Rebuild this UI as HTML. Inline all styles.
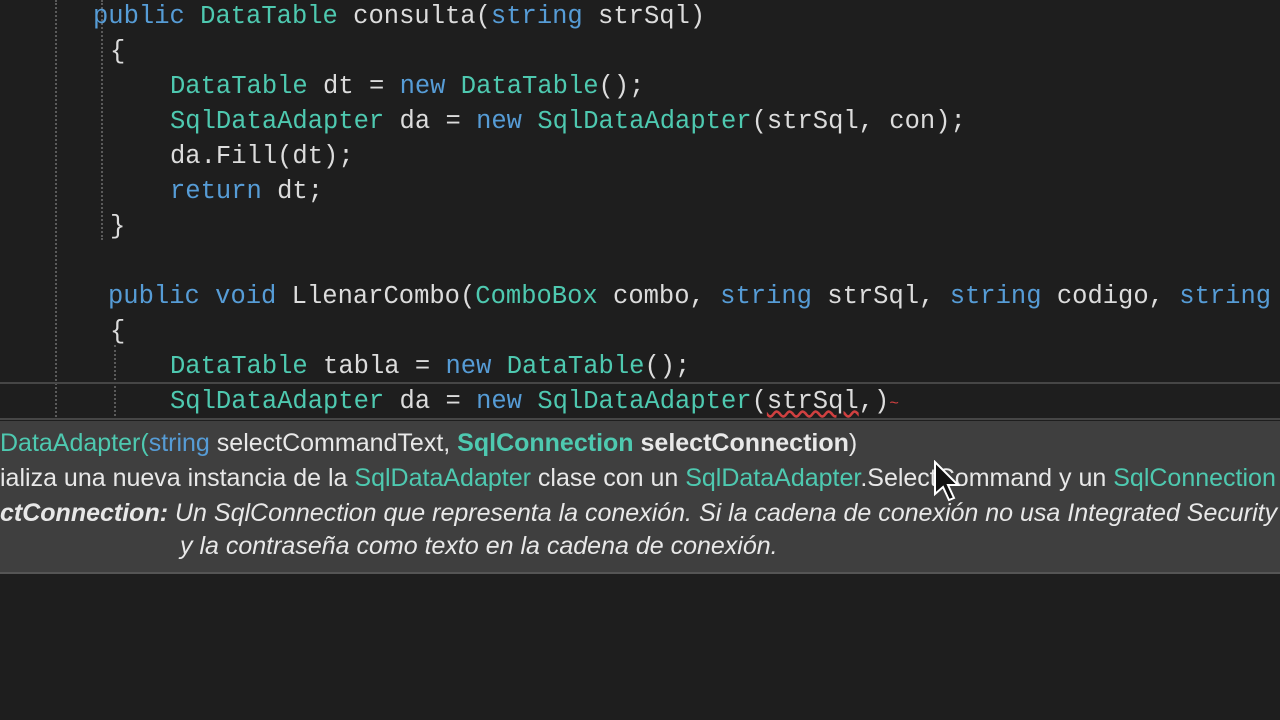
<!DOCTYPE html>
<html><head><meta charset="utf-8"><style>
body{margin:0;width:1280px;height:720px;background:#1e1e1e;overflow:hidden;position:relative}
.l{position:absolute;left:0;font-family:"Liberation Mono",monospace;font-size:25.5px;color:#dcdcdc;white-space:pre;line-height:35px;height:35px}
.k{color:#569cd6}.t{color:#4ec9b0}
.g{position:absolute;width:0;border-left:2px dotted #5a5a5a}
.tt{position:absolute;left:0;top:421px;width:1280px;height:151px;background:#3f3f3f;border-bottom:2px solid #555}
.s{position:absolute;left:0;font-family:"Liberation Sans",sans-serif;font-size:25px;color:#e8e8e8;white-space:pre;line-height:34px}
</style></head><body>
<div class="g" style="left:55px;top:0;height:420px"></div>
<div class="g" style="left:101px;top:0;height:240px"></div>
<div class="g" style="left:114px;top:345px;height:75px"></div>
<div style="position:absolute;left:0;top:382px;width:1280px;height:34px;border-top:2px solid #464646;border-bottom:2px solid #464646"></div>
<div class="l" style="top:-1px;left:93px"><span class="k">public</span> <span class="t">DataTable</span> consulta(<span class="k">string</span> strSql)</div>
<div class="l" style="top:34px;left:110px">{</div>
<div class="l" style="top:69px;left:170px"><span class="t">DataTable</span> dt = <span class="k">new</span> <span class="t">DataTable</span>();</div>
<div class="l" style="top:104px;left:170px"><span class="t">SqlDataAdapter</span> da = <span class="k">new</span> <span class="t">SqlDataAdapter</span>(strSql, con);</div>
<div class="l" style="top:139px;left:170px">da.Fill(dt);</div>
<div class="l" style="top:174px;left:170px"><span class="k">return</span> dt;</div>
<div class="l" style="top:209px;left:110px">}</div>
<div class="l" style="top:279px;left:108px"><span class="k">public</span> <span class="k">void</span> LlenarCombo(<span class="t">ComboBox</span> combo, <span class="k">string</span> strSql, <span class="k">string</span> codigo, <span class="k">string</span></div>
<div class="l" style="top:314px;left:110px">{</div>
<div class="l" style="top:349px;left:170px"><span class="t">DataTable</span> tabla = <span class="k">new</span> <span class="t">DataTable</span>();</div>
<div class="l" style="top:384px;left:170px"><span class="t">SqlDataAdapter</span> da = <span class="k">new</span> <span class="t">SqlDataAdapter</span>(<span style="text-decoration:underline wavy #d04040">strSql</span>,)<span style="color:#d04040;font-size:16px">~</span></div>
<div class="tt"></div>
<div class="s" style="top:426px"><span class="t">DataAdapter(</span><span class="k">string</span> selectCommandText, <b class="t">SqlConnection</b> <b>selectConnection</b>)</div>
<div class="s" style="top:461px">ializa una nueva instancia de la <span class="t">SqlDataAdapter</span> clase con un <span class="t">SqlDataAdapter</span>.SelectCommand y un <span class="t">SqlConnection</span></div>
<div class="s" style="top:496px"><b><i>ctConnection:</i></b> <i>Un SqlConnection que representa la conexión. Si la cadena de conexión no usa Integrated Security</i></div>
<div class="s" style="top:529px;left:180px"><i>y la contraseña como texto en la cadena de conexión.</i></div>
<svg style="position:absolute;left:933px;top:460px" width="28" height="44" viewBox="0 0 28 44"><path d="M2 2 L2 34 L10 27 L16 40 L21 38 L15 25 L25 25 Z" fill="#111" stroke="#fff" stroke-width="2"/></svg>
</body></html>
